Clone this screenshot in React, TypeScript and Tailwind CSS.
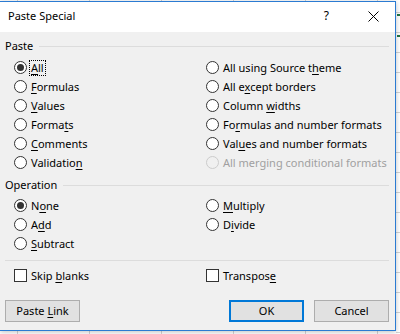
import React from "react";

const F = "font-['Segoe_UI','Noto_Sans',sans-serif]";

function U({ children }: { children: React.ReactNode }) {
  return <span className="underline underline-offset-[2px] decoration-1">{children}</span>;
}

function Radio({ checked = false, disabled = false }: { checked?: boolean; disabled?: boolean }) {
  return (
    <span
      className={`flex w-[13px] h-[13px] shrink-0 items-center justify-center rounded-full border ${
        disabled ? "border-[#cccccc] bg-[#f0f0f0]" : "border-[#333333] bg-white"
      }`}
    >
      {checked && <span className="w-[7px] h-[7px] rounded-full bg-[#333333]" />}
    </span>
  );
}

function Row({
  label,
  checked,
  disabled,
  focus,
}: {
  label: React.ReactNode;
  checked?: boolean;
  disabled?: boolean;
  focus?: boolean;
}) {
  return (
    <div className="flex h-[19px] items-center gap-[4px] whitespace-nowrap">
      <Radio checked={checked} disabled={disabled} />
      <span
        className={`leading-[14px] whitespace-nowrap ${disabled ? "text-[#a0a0a0]" : "text-black"} ${
          focus ? "border border-dotted border-black px-[1px] -ml-[2px]" : ""
        }`}
      >
        {label}
      </span>
    </div>
  );
}

function Check({ label }: { label: React.ReactNode }) {
  return (
    <div className="flex h-[19px] items-center gap-[4px] whitespace-nowrap">
      <span className="w-[13px] h-[13px] shrink-0 border border-[#333333] bg-white" />
      <span className="leading-[14px]">{label}</span>
    </div>
  );
}

function Header({ label }: { label: string }) {
  return (
    <div className="flex h-[16px] items-center">
      <span className="leading-[14px]">{label}</span>
      <span className="ml-[6px] h-px flex-1 bg-[#dcdcdc]" />
    </div>
  );
}

function Button({ children, primary }: { children: React.ReactNode; primary?: boolean }) {
  return (
    <div
      className={`flex w-[75px] h-[22px] items-center justify-center bg-[#e1e1e1] ${
        primary ? "border-2 border-[#0078d7]" : "border border-[#adadad]"
      }`}
    >
      <span className="whitespace-pre leading-[14px]">{children}</span>
    </div>
  );
}

export default function App() {
  return (
    <div
      className={`relative w-[400px] h-[334px] overflow-hidden bg-white ${F} text-[11px] text-black bg-[linear-gradient(90deg,#d4d4d4_1px,transparent_1px)] bg-[length:72px_100%] bg-[position:17px_0]`}
    >
      <div className="absolute right-0 top-0 w-[4px] h-full bg-[linear-gradient(180deg,#d4d4d4_1px,transparent_1px)] bg-[length:100%_20px] bg-[position:0_12px]" />
      <div className="absolute right-0 top-[14px] w-[3px] h-[2px] bg-[#217346]" />
      <div className="absolute right-0 top-[35px] w-[3px] h-[2px] bg-[#217346]" />

      <div className="absolute left-0 top-[1px] w-[396px] h-[330px] flex flex-col border-t border-r border-b border-[#2b7bd2] bg-[#f0f0f0] shadow-[0_1px_5px_rgba(0,0,0,0.25)]">
        <div className="flex h-[30px] items-center bg-white pl-[8px] pr-[16px]">
          <span className="flex-1 text-[11px] leading-[14px] -mt-[2px]">Paste Special</span>
          <span className="mr-[39px] text-[12px] leading-[14px] -mt-[3px]">?</span>
          <svg width="11" height="11" viewBox="0 0 11 11" className="-mt-[2px]">
            <path d="M0.5 0.5L10.5 10.5M10.5 0.5L0.5 10.5" stroke="#000" strokeWidth="1" />
          </svg>
        </div>

        <div className="flex flex-col pl-[5px] pr-[6px] pt-[6px]">
          <Header label="Paste" />
          <div className="mt-[4px] grid grid-cols-[192px_1fr] pl-[9px]">
            <div className="flex flex-col">
              <Row checked focus label={<><U>A</U>ll</>} />
              <Row label={<><U>F</U>ormulas</>} />
              <Row label={<><U>V</U>alues</>} />
              <Row label={<>Forma<U>t</U>s</>} />
              <Row label={<><U>C</U>omments</>} />
              <Row label={<>Validatio<U>n</U></>} />
            </div>
            <div className="flex flex-col">
              <Row label={<>All using Source t<U>h</U>eme</>} />
              <Row label={<>All e<U>x</U>cept borders</>} />
              <Row label={<>Column <U>w</U>idths</>} />
              <Row label={<>Fo<U>r</U>mulas and number formats</>} />
              <Row label={<>Val<U>u</U>es and number formats</>} />
              <Row disabled label="All merging conditional formats" />
            </div>
          </div>

          <div className="mt-[5px]">
            <Header label="Operation" />
          </div>
          <div className="mt-[3px] grid grid-cols-[192px_1fr] pl-[9px]">
            <div className="flex flex-col">
              <Row checked label={<>N<U>o</U>ne</>} />
              <Row label={<>A<U>d</U>d</>} />
              <Row label={<><U>S</U>ubtract</>} />
            </div>
            <div className="flex flex-col">
              <Row label={<><U>M</U>ultiply</>} />
              <Row label={<>D<U>i</U>vide</>} />
            </div>
          </div>

          <div className="mt-[7px] h-px bg-[#dcdcdc]" />

          <div className="mt-[5px] grid grid-cols-[192px_1fr] pl-[9px]">
            <Check label={<>Skip <U>b</U>lanks</>} />
            <Check label={<>Transpos<U>e</U></>} />
          </div>

          <div className="mt-[15px] flex items-center">
            <Button>
              <>Paste <U>L</U>ink</>
            </Button>
            <div className="flex-1" />
            <Button primary>OK</Button>
            <div className="w-[10px]" />
            <Button>Cancel</Button>
          </div>
        </div>
      </div>
    </div>
  );
}
